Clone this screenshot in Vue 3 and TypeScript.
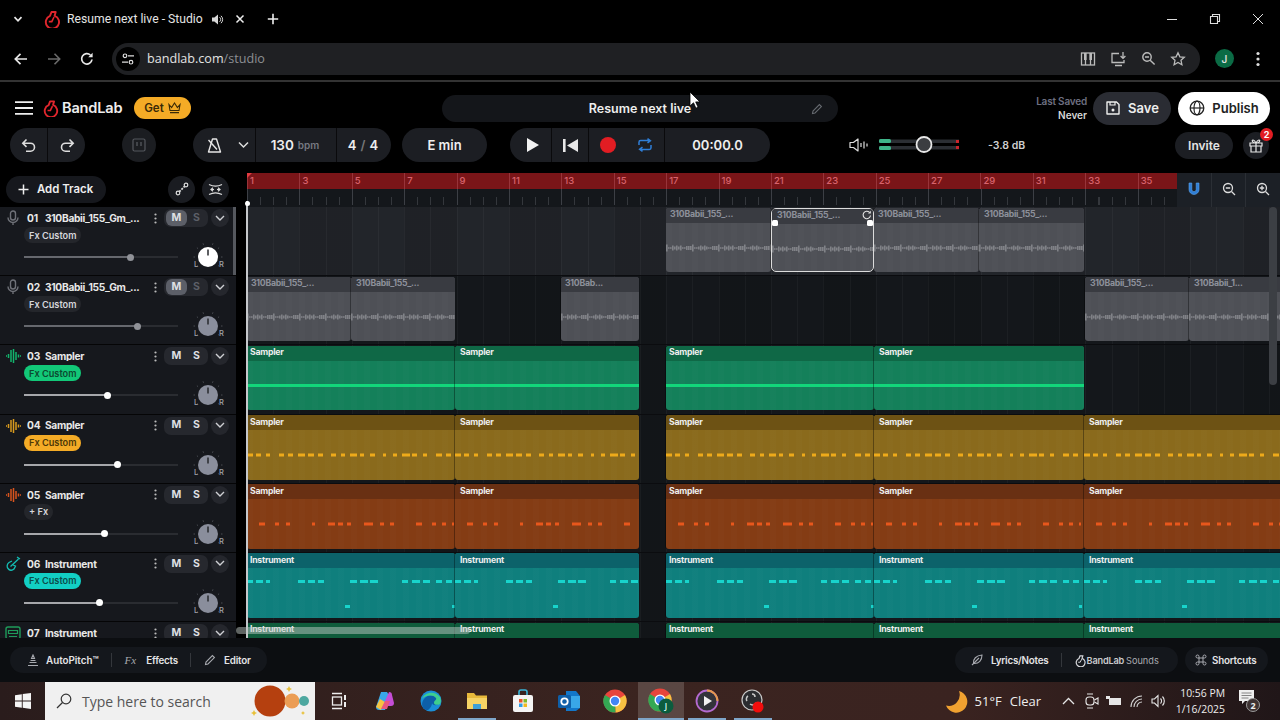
<script setup lang="ts">
import { computed } from "vue";

type Tone = "grey" | "green" | "gold" | "orange" | "teal" | "forest";

interface Track {
  num: string;
  name: string;
  chip: string;
  tone: Tone;
  icon: "mic" | "wave" | "guitar" | "keys";
  thumbX: number;
  muted?: boolean;
  bright?: boolean;
}

const BAR = 26.2;
const SLIDER_START = 24;
const SLIDER_WIDTH = 154;

const tracks: Track[] = [
  { num: "01", name: "310Babii_155_Gm_...", chip: "Fx Custom", tone: "grey", icon: "mic", thumbX: 130, muted: true, bright: true },
  { num: "02", name: "310Babii_155_Gm_...", chip: "Fx Custom", tone: "grey", icon: "mic", thumbX: 138, muted: true },
  { num: "03", name: "Sampler", chip: "Fx Custom", tone: "green", icon: "wave", thumbX: 107 },
  { num: "04", name: "Sampler", chip: "Fx Custom", tone: "gold", icon: "wave", thumbX: 117 },
  { num: "05", name: "Sampler", chip: "+ Fx", tone: "orange", icon: "wave", thumbX: 105 },
  { num: "06", name: "Instrument", chip: "Fx Custom", tone: "teal", icon: "guitar", thumbX: 99 },
  // last row is scrolled past the fold, only its top line shows
  { num: "07", name: "Instrument", chip: "", tone: "forest", icon: "keys", thumbX: 90 },
];

const iconColor: Record<Tone, string> = {
  grey: "#6f7178",
  green: "#13b56d",
  gold: "#d99a1e",
  orange: "#d9541e",
  teal: "#14bdb4",
  forest: "#1f9a5a",
};

// note spans in px from the clip's left edge
const goldNotes = [[0,6],[9,14],[19,23],[32,37],[41,46],[51,58],[61,67],[71,76],[84,89],[94,98],[103,110],[113,117],[123,128],[136,139],[146,150],[155,163],[165,170],[176,180],[189,195],[199,204]];
const orangeNotes = [[12,18],[28,32],[39,43],[65,68],[81,88],[91,96],[100,104],[117,126],[133,137],[143,147],[169,175],[185,189],[195,199],[205,207]];
const tealNotes = [[0,6],[9,16],[19,23],[51,58],[61,68],[71,77],[103,110],[113,121],[123,131],[155,161],[165,173],[176,183],[189,195],[199,205]];
const tealLow = [[98,103],[205,208]];

interface Rect { x: number; y: number; w: number; h: number }

function notesFor(tone: Tone, width: number): Rect[] {
  const spans = (list: number[][], y: number) =>
    list
      .filter((n) => n[0] < width)
      .map((n) => ({ x: n[0], y, w: Math.min(n[1], width) - n[0], h: 3 }));
  if (tone === "green") return [{ x: 0, y: 23, w: width, h: 3 }];
  if (tone === "gold") return spans(goldNotes, 23.5);
  if (tone === "orange") return spans(orangeNotes, 23.5);
  if (tone === "teal") return [...spans(tealNotes, 12), ...spans(tealLow, 37)];
  if (tone === "grey") {
    const out: Rect[] = [];
    for (let x = 0; x < width; x += 2) {
      const p = x % 26;
      const h = p < 2 ? 7 : p < 6 ? 1.5 : p < 16 ? 3 + ((x * 7) % 4) : p < 20 ? 1.5 : 4 - ((x * 3) % 3);
      out.push({ x, y: 25 - h / 2, w: 1.6, h });
    }
    return out;
  }
  return [];
}

function clipsFrom(edges: [number, number][], label: string) {
  return edges.map(([a, b]) => ({ x: a - 247, w: b - a, label }));
}

const mainEdges: [number, number][] = [[247, 455], [455, 639], [666, 874], [874, 1084], [1084, 1290]];

const lanes = computed(() => [
  {
    tone: "grey" as Tone,
    clips: [
      { x: 419, w: 105, label: "310Babii_155_..." },
      { x: 524, w: 103, label: "310Babii_155_...", selected: true },
      { x: 627, w: 105, label: "310Babii_155_..." },
      { x: 732, w: 105, label: "310Babii_155_..." },
    ],
  },
  {
    tone: "grey" as Tone,
    clips: [
      { x: 0, w: 104, label: "310Babii_155_..." },
      { x: 104, w: 104, label: "310Babii_155_..." },
      { x: 314, w: 78, label: "310Bab..." },
      { x: 838, w: 104, label: "310Babii_155_..." },
      { x: 942, w: 104, label: "310Babii_1..." },
    ],
  },
  { tone: "green" as Tone, clips: clipsFrom(mainEdges.slice(0, 4), "Sampler") },
  { tone: "gold" as Tone, clips: clipsFrom(mainEdges, "Sampler") },
  { tone: "orange" as Tone, clips: clipsFrom(mainEdges, "Sampler") },
  { tone: "teal" as Tone, clips: clipsFrom(mainEdges, "Instrument") },
  { tone: "forest" as Tone, clips: clipsFrom(mainEdges, "Instrument") },
]);

const rulerLabels = Array.from({ length: 18 }, (_, i) => i * 2 + 1);

function sliderPct(t: Track) {
  return ((t.thumbX - SLIDER_START) / SLIDER_WIDTH) * 100;
}

const knobTicks = [-130, -90, -50, -20, 20, 50, 90, 130].map((deg) => {
  const r = (deg * Math.PI) / 180;
  return { x1: 20 + Math.sin(r) * 13, y1: 16 - Math.cos(r) * 13, x2: 20 + Math.sin(r) * 14.5, y2: 16 - Math.cos(r) * 14.5 };
});

const barPx = `${BAR}px`;
</script>

<template>
  <div class="screen" :style="{ '--bar': barPx }">
    <!-- browser tab strip -->
    <div class="tabstrip">
      <svg class="tab-chevron" width="12" height="12" viewBox="0 0 12 12"><path d="M2.5 4.2 6 7.8l3.5-3.6" fill="none" stroke="#e8e8e8" stroke-width="1.7" /></svg>
      <svg class="tab-logo" width="18" height="18" viewBox="0 0 18 18"><path d="M7.5 2h4.2L10.6 5.8a6.6 6.6 0 1 1-4.6.1z" fill="none" stroke="#e0262d" stroke-width="1.9" stroke-linejoin="round" /><path d="M10 7 7.8 11.6H4.8" fill="none" stroke="#e0262d" stroke-width="1.6" /></svg>
      <span class="tab-title">Resume next live - Studio</span>
      <svg class="tab-speaker" width="13" height="13" viewBox="0 0 13 13"><path d="M1 4.5h2.4L7 1.6v9.8L3.4 8.5H1z" fill="#d8d8d8" /><path d="M8.6 4.2a3 3 0 0 1 0 4.6M10 2.8a5 5 0 0 1 0 7.4" fill="none" stroke="#d8d8d8" stroke-width="1" /></svg>
      <svg class="tab-close" width="10" height="10" viewBox="0 0 10 10"><path d="m1.5 1.5 7 7m0-7-7 7" stroke="#eee" stroke-width="1.5" /></svg>
      <svg class="tab-new" width="12" height="12" viewBox="0 0 12 12"><path d="M6 .8v10.4M.8 6h10.4" stroke="#eee" stroke-width="1.6" /></svg>
      <div class="window-buttons">
        <svg width="12" height="12" viewBox="0 0 12 12"><path d="M1 6.5h10" stroke="#ddd" stroke-width="1" /></svg>
        <svg width="12" height="12" viewBox="0 0 12 12"><path d="M1.5 3.5h7v7h-7zM3.5 3.5v-2h7v7h-2" fill="none" stroke="#ddd" stroke-width="1.1" /></svg>
        <svg width="12" height="12" viewBox="0 0 12 12"><path d="m1 1 10 10m0-10L1 11" stroke="#ddd" stroke-width="1" /></svg>
      </div>
    </div>

    <!-- browser toolbar -->
    <div class="toolbar">
      <svg class="nav first" width="16" height="16" viewBox="0 0 16 16"><path d="M14 8H2.5M7.5 2.8 2.3 8l5.2 5.2" fill="none" stroke="#e8e8e8" stroke-width="1.7" /></svg>
      <svg class="nav" width="16" height="16" viewBox="0 0 16 16"><path d="M2 8h11.5M8.5 2.8 13.7 8l-5.2 5.2" fill="none" stroke="#6a6a6a" stroke-width="1.6" /></svg>
      <svg class="nav" width="16" height="16" viewBox="0 0 16 16"><path d="M13 8.5A5.2 5.2 0 1 1 11.4 4" fill="none" stroke="#e8e8e8" stroke-width="1.7" /><path d="M13.6 1.8v4.4H9.2z" fill="#e8e8e8" /></svg>
      <div class="omnibox">
        <span class="site-info">
          <svg width="14" height="14" viewBox="0 0 14 14"><circle cx="4" cy="3.8" r="1.8" fill="none" stroke="#ddd" stroke-width="1.2" /><path d="M7 3.8h6M1 10.2h6" stroke="#ddd" stroke-width="1.2" /><circle cx="10" cy="10.2" r="1.8" fill="none" stroke="#ddd" stroke-width="1.2" /></svg>
        </span>
        <span class="url">bandlab.com<span class="url-path">/studio</span></span>
        <div class="omni-icons">
          <svg width="16" height="16" viewBox="0 0 16 16"><rect x="1.5" y="2" width="13" height="12" fill="none" stroke="#bbb" stroke-width="1.3" /><path d="M5.5 2v12M10.5 2v12" stroke="#bbb" stroke-width="1.3" /><path d="M4 2h2.6v7H4zM9.4 2H12v7H9.4z" fill="#bbb" /></svg>
          <svg width="17" height="16" viewBox="0 0 17 16"><path d="M9 2.5H2v9h12V9M5 14.5h7" fill="none" stroke="#bbb" stroke-width="1.3" /><path d="M13 1v6M10.6 5l2.4 2.4L15.4 5" fill="none" stroke="#bbb" stroke-width="1.3" /></svg>
          <svg width="15" height="15" viewBox="0 0 15 15"><circle cx="6" cy="6" r="4.2" fill="none" stroke="#bbb" stroke-width="1.4" /><path d="M4 6h4M9.2 9.2 13.6 13.6" stroke="#bbb" stroke-width="1.4" /></svg>
          <svg width="16" height="16" viewBox="0 0 16 16"><path d="m8 1.8 1.9 4 4.4.5-3.3 3 .9 4.4L8 11.5l-3.9 2.2.9-4.4-3.3-3 4.4-.5z" fill="none" stroke="#bbb" stroke-width="1.3" /></svg>
        </div>
      </div>
      <span class="avatar">J</span>
      <svg class="kebab" width="4" height="16" viewBox="0 0 4 16"><circle cx="2" cy="2.5" r="1.6" fill="#ddd" /><circle cx="2" cy="8" r="1.6" fill="#ddd" /><circle cx="2" cy="13.5" r="1.6" fill="#ddd" /></svg>
    </div>

    <!-- studio header -->
    <div class="studio-head">
      <svg class="burger" width="18" height="14" viewBox="0 0 18 14"><path d="M0 1.2h18M0 7h18M0 12.8h18" stroke="#eee" stroke-width="1.8" /></svg>
      <svg class="bl-logo" width="17" height="18" viewBox="0 0 18 18"><path d="M7.5 2h4.2L10.6 5.8a6.6 6.6 0 1 1-4.6.1z" fill="none" stroke="#e0262d" stroke-width="2" stroke-linejoin="round" /><path d="M10 7 7.8 11.6H4.8" fill="none" stroke="#e0262d" stroke-width="1.7" /></svg>
      <span class="bl-name">BandLab</span>
      <span class="get-pill">Get
        <svg width="13" height="12" viewBox="0 0 13 12"><path d="M1 2.5 3.6 5.5 6.5 1l2.9 4.5L12 2.5 11 8.5H2zM2 10.6h9" fill="none" stroke="#3a2a06" stroke-width="1.1" /></svg>
      </span>
      <div class="title-pill">
        <span>Resume next live</span>
        <svg width="12" height="12" viewBox="0 0 12 12"><path d="M1.5 10.5 2 8 8.4 1.6l2 2L4 10z" fill="none" stroke="#666a70" stroke-width="1.1" /></svg>
      </div>
      <div class="saved"><span class="saved-top">Last Saved</span><span class="saved-val">Never</span></div>
      <button class="btn-save">
        <svg width="16" height="16" viewBox="0 0 16 16"><path d="M2 2h9.5L14 4.5V14H2z" fill="none" stroke="#eee" stroke-width="1.4" stroke-linejoin="round" /><path d="M5 2v3h5V2" fill="none" stroke="#eee" stroke-width="1.2" /><circle cx="8" cy="10" r="1.5" fill="#eee" /></svg>
        Save
      </button>
      <button class="btn-publish">
        <svg width="16" height="16" viewBox="0 0 16 16"><circle cx="8" cy="8" r="6.8" fill="none" stroke="#222" stroke-width="1.3" /><ellipse cx="8" cy="8" rx="3" ry="6.8" fill="none" stroke="#222" stroke-width="1.2" /><path d="M1.2 8h13.6" stroke="#222" stroke-width="1.2" /></svg>
        Publish
      </button>
    </div>

    <!-- transport row -->
    <div class="transport-row">
      <div class="pill undo-group">
        <span class="cell undo-cell">
          <svg width="16" height="15" viewBox="0 0 16 15"><path d="M5.5 1.5 1.8 5.2l3.7 3.7M2 5.2h7.5a4 4 0 0 1 0 8H5" fill="none" stroke="#ddd" stroke-width="1.6" /></svg>
        </span>
        <span class="cell undo-cell">
          <svg width="16" height="15" viewBox="0 0 16 15"><path d="m10.5 1.5 3.7 3.7-3.7 3.7M14 5.2H6.5a4 4 0 0 0 0 8H11" fill="none" stroke="#ddd" stroke-width="1.6" /></svg>
        </span>
      </div>
      <span class="disabled-btn">
        <svg width="14" height="14" viewBox="0 0 14 14"><rect x="1" y="1" width="12" height="12" rx="1.5" fill="none" stroke="#55585e" stroke-width="1.2" /><path d="M5 4v4M9 4v4" stroke="#55585e" stroke-width="1.3" /></svg>
      </span>
      <div class="pill tempo-group">
        <span class="cell metro-cell">
          <svg width="17" height="17" viewBox="0 0 17 17"><path d="M6.5 2h4l4 13H2.5z" fill="none" stroke="#e6e6e6" stroke-width="1.4" stroke-linejoin="round" /><path d="M2.5 3 11 12.5" stroke="#e6e6e6" stroke-width="1.4" /></svg>
          <svg width="11" height="8" viewBox="0 0 11 8"><path d="m1 1.5 4.5 4.5L10 1.5" fill="none" stroke="#ddd" stroke-width="1.5" /></svg>
        </span>
        <span class="cell bpm-cell"><b>130</b><em>bpm</em></span>
        <span class="cell sig-cell"><b>4</b><i>/</i><b>4</b></span>
      </div>
      <div class="pill key-pill">E min</div>
      <div class="pill play-group">
        <span class="cell play-cell">
          <svg width="12" height="14" viewBox="0 0 12 14"><path d="M0 0v14l12-7z" fill="#f2f2f2" /></svg>
        </span>
        <span class="cell back-cell">
          <svg width="15" height="13" viewBox="0 0 15 13"><path d="M0 0h2.6v13H0zM15 0v13L4 6.5z" fill="#e8e8e8" /></svg>
        </span>
        <span class="cell rec-cell">
          <span class="rec-dot"></span>
          <svg width="16" height="14" viewBox="0 0 16 14"><path d="M2 7V4.2a1.6 1.6 0 0 1 1.6-1.6H13M14 7v2.8a1.6 1.6 0 0 1-1.6 1.6H3M10.5.6 13.4 2.7l-2.9 2.2M5.5 9.1 2.6 11.3l2.9 2.1" fill="none" stroke="#2f7fd8" stroke-width="1.5" /></svg>
        </span>
        <span class="cell time-cell">00:00.0</span>
      </div>
      <div class="volume">
        <svg width="19" height="14" viewBox="0 0 19 14"><path d="M1 4.5h3.4L9 1v12L4.4 9.500H1z" fill="none" stroke="#ddd" stroke-width="1.2" stroke-linejoin="round" /><path d="M12 5v4M15 3.500v7M18 5.500v3" stroke="#ddd" stroke-width="1.2" /></svg>
        <svg class="vol-meter" width="82" height="20" viewBox="0 0 82 20"><rect x="1" y="4.5" width="80" height="3.5" fill="#2b2e33" /><rect x="1" y="11" width="80" height="3.5" fill="#2b2e33" /><rect x="1" y="4" width="12" height="4" rx="1.5" fill="#3fb58a" /><rect x="1" y="11" width="12" height="4" rx="1.5" fill="#3fb58a" /><rect x="78" y="5" width="3" height="3" fill="#c9252c" /><rect x="78" y="11" width="3" height="3" fill="#c9252c" /><circle cx="46" cy="9.5" r="7.5" fill="#3b3d41" stroke="#e8e8e8" stroke-width="1.8" /></svg>
        <span class="vol-db">-3.8 dB</span>
      </div>
      <div class="invite-wrap">
        <span class="invite">Invite</span>
        <span class="gift">
          <svg width="14" height="15" viewBox="0 0 14 15"><path d="M1 5h12v3H1zM2 8v6h10V8M7 5v9M7 5C5 1 2.5 1.500 3.500 3.500 4 4.500 5.500 5 7 5c1.500 0 3-.5 3.500-1.500C11.500 1.500 9 1 7 5z" fill="none" stroke="#e6e6e6" stroke-width="1.2" /></svg>
          <span class="gift-badge">2</span>
        </span>
      </div>
    </div>

    <!-- arrangement -->
    <div class="arrange">
      <div class="side">
        <div class="side-head">
          <span class="add-track">
            <svg width="11" height="11" viewBox="0 0 11 11"><path d="M5.500.5v10M.5 5.500h10" stroke="#eee" stroke-width="1.5" /></svg>
            Add Track
          </span>
          <span class="round-btn first-round">
            <svg width="14" height="14" viewBox="0 0 14 14"><circle cx="3" cy="11" r="1.8" fill="none" stroke="#ddd" stroke-width="1.2" /><circle cx="11" cy="3" r="1.8" fill="none" stroke="#ddd" stroke-width="1.2" /><path d="M4.300 9.700 9.700 4.300" stroke="#ddd" stroke-width="1.8" stroke-dasharray="2 1" /></svg>
          </span>
          <span class="round-btn">
            <svg width="15" height="15" viewBox="0 0 15 15"><path d="M1 2.500c4 2 9 2 13 0M1 12.500c4-2 9-2 13 0M3 7.500H6M9 7.500h3M5 5.800 3 7.500l2 1.700M10 5.800l2 1.700-2 1.700" fill="none" stroke="#ddd" stroke-width="1.2" /></svg>
          </span>
        </div>
        <div class="track-list">
          <div v-for="t in tracks" :key="t.num" class="track" :class="{ selected: t.bright }">
            <div class="track-top">
              <svg v-if="t.icon === 'mic'" class="t-icon" width="16" height="16" viewBox="0 0 16 16"><rect x="5.500" y="1" width="5" height="9" rx="2.5" fill="none" stroke="#6f7178" stroke-width="1.4" /><path d="M3 7.500a5 5 0 0 0 10 0M8 12.500V15" fill="none" stroke="#6f7178" stroke-width="1.4" /></svg>
              <svg v-else-if="t.icon === 'wave'" class="t-icon" width="16" height="16" viewBox="0 0 16 16"><path d="M1 8h1M3.500 6v4M6 2v12M8.500 1v14M11 4v8M13.500 6.500v3M15 8h1" :stroke="iconColor[t.tone]" stroke-width="1.5" fill="none" /></svg>
              <svg v-else-if="t.icon === 'guitar'" class="t-icon" width="16" height="16" viewBox="0 0 16 16"><path d="M7 5 4 6.500C2 8 1.500 10.500 3 12.500s4 2.500 6 .5l1.500-3L8 9" fill="none" :stroke="iconColor[t.tone]" stroke-width="1.3" /><path d="m5.500 10.500 8-7.500M12 1l3 2" fill="none" :stroke="iconColor[t.tone]" stroke-width="1.3" /></svg>
              <svg v-else class="t-icon" width="16" height="16" viewBox="0 0 16 16"><rect x="1" y="2" width="14" height="12" rx="2" fill="none" :stroke="iconColor[t.tone]" stroke-width="1.4" /><path d="M3.500 5.500h9v3h-9zM4 11.500h8" fill="none" :stroke="iconColor[t.tone]" stroke-width="1.2" /></svg>
              <span class="t-num">{{ t.num }}</span>
              <span class="t-name">{{ t.name }}</span>
              <svg class="t-dots" width="3" height="11" viewBox="0 0 3 11"><circle cx="1.5" cy="1.5" r="1.1" fill="#bbb" /><circle cx="1.5" cy="5.5" r="1.1" fill="#bbb" /><circle cx="1.5" cy="9.5" r="1.1" fill="#bbb" /></svg>
              <div class="ms-group">
                <span class="ms-m" :class="{ on: t.muted }">M</span>
                <span class="ms-s" :class="{ dim: t.muted }">S</span>
              </div>
              <span class="t-chevron">
                <svg width="10" height="7" viewBox="0 0 10 7"><path d="m1 1 4 4 4-4" fill="none" stroke="#cfd0d4" stroke-width="1.4" /></svg>
              </span>
            </div>
            <span v-if="t.chip" class="chip" :class="`chip-${t.tone}`">{{ t.chip }}</span>
            <div v-if="t.chip" class="track-mix">
              <div class="slider" :class="{ muted: t.muted }">
                <span class="slider-fill" :style="{ width: sliderPct(t) + '%' }"></span>
              </div>
              <svg class="knob" width="40" height="32" viewBox="0 0 40 32">
                <line v-for="(k, i) in knobTicks" :key="i" :x1="k.x1" :y1="k.y1" :x2="k.x2" :y2="k.y2" stroke="#55585e" stroke-width="0.8" />
                <circle cx="20" cy="16" r="10" :fill="t.bright ? '#ffffff' : '#8a8e9c'" />
                <path d="M20 8.500v6" stroke="#26282d" stroke-width="1.5" />
                <text x="6" y="26" class="knob-letter">L</text>
                <text x="31" y="26" class="knob-letter">R</text>
              </svg>
            </div>
          </div>
          <span class="side-scroll"></span>
        </div>
      </div>

      <div class="timeline">
        <div class="ruler-row">
          <div class="ruler">
            <div class="ruler-top">
              <span v-for="n in rulerLabels" :key="n" class="ruler-cell">{{ n }}</span>
            </div>
            <div class="ruler-ticks"></div>
            <span class="loop-corner"></span>
          </div>
          <div class="zoom-tools">
            <span class="zoom-cell">
              <svg width="12" height="14" viewBox="0 0 12 14"><path d="M1 1h2.800v6.500a2.200 2.200 0 0 0 4.400 0V1H11v6.500a5 5 0 0 1-10 0z" fill="#2f7fd8" stroke="#5ea6ec" stroke-width="0.6" /></svg>
            </span>
            <span class="zoom-cell">
              <svg width="14" height="14" viewBox="0 0 14 14"><circle cx="6" cy="6" r="4.500" fill="none" stroke="#ddd" stroke-width="1.3" /><path d="M3.800 6h4.400M9.500 9.500l3.500 3.500" stroke="#ddd" stroke-width="1.3" /></svg>
            </span>
            <span class="zoom-cell">
              <svg width="14" height="14" viewBox="0 0 14 14"><circle cx="6" cy="6" r="4.500" fill="none" stroke="#ddd" stroke-width="1.3" /><path d="M3.800 6h4.400M6 3.800v4.400M9.500 9.500l3.500 3.500" stroke="#ddd" stroke-width="1.3" /></svg>
            </span>
          </div>
        </div>
        <div class="lanes">
          <div v-for="(lane, li) in lanes" :key="li" class="lane" :class="{ 'lane-lit': li === 0 }">
            <div
              v-for="(c, ci) in lane.clips"
              :key="ci"
              class="clip"
              :class="[`clip-${lane.tone}`, { 'clip-selected': 'selected' in c && c.selected }]"
              :style="{ left: c.x + 'px', width: c.w + 'px' }"
            >
              <div class="clip-head">
                <span>{{ c.label }}</span>
                <svg v-if="'selected' in c && c.selected" width="10" height="10" viewBox="0 0 10 10"><path d="M8.500 5.500A3.700 3.700 0 1 1 7.300 2.200" fill="none" stroke="#e6e6e6" stroke-width="1.1" /><path d="M8.800.8v2.800H6z" fill="#e6e6e6" /></svg>
              </div>
              <div class="clip-body">
                <svg :width="c.w" height="52">
                  <rect
                    v-for="(r, ri) in notesFor(lane.tone, c.w)"
                    :key="ri"
                    :x="r.x"
                    :y="r.y"
                    :width="r.w"
                    :height="r.h"
                    :class="`note-${lane.tone}`"
                  />
                </svg>
              </div>
              <template v-if="'selected' in c && c.selected">
                <span class="handle handle-l"></span>
                <span class="handle handle-r"></span>
              </template>
            </div>
          </div>
          <span class="v-scroll"></span>
        </div>
        <span class="playhead"></span>
      </div>
      <span class="h-scroll"></span>
    </div>

    <!-- bottom bar -->
    <div class="bottom-bar">
      <div class="bb-group bb-left">
        <span class="bb-item">
          <svg width="12" height="13" viewBox="0 0 12 13"><path d="M6 1 4.500 4.500h3zM3.500 6.500h5M2.500 8.500h7M1 11.500h10" fill="none" stroke="#a8aab0" stroke-width="1.1" /></svg>
          <b class="pitch">AutoPitch™</b>
        </span>
        <span class="bb-sep"></span>
        <span class="bb-item">
          <i class="fx-mark">Fx</i>
          <b class="gap-fx">Effects</b>
        </span>
        <span class="bb-sep"></span>
        <span class="bb-item">
          <svg width="12" height="12" viewBox="0 0 12 12"><path d="M1.500 10.500 2 8 8.400 1.600l2 2L4 10z" fill="none" stroke="#a8aab0" stroke-width="1.1" /></svg>
          <b class="gap-b">Editor</b>
        </span>
      </div>
      <div class="bb-group bb-right">
        <span class="bb-item">
          <svg width="12" height="12" viewBox="0 0 12 12"><path d="M1 11 5 7M2.500 9.500C2 5 5 1.500 11 1c0 5-3 9-8.500 8.500zM5 7l3-3" fill="none" stroke="#a8aab0" stroke-width="1.1" /></svg>
          <b class="gap-b">Lyrics/Notes</b>
        </span>
        <span class="bb-sep"></span>
        <span class="bb-item sounds">
          <svg width="12" height="13" viewBox="0 0 18 18"><path d="M7.500 2h4.200L10.600 5.800a6.600 6.600 0 1 1-4.600.1z" fill="none" stroke="#d5d6da" stroke-width="1.8" /><path d="M10 7 7.800 11.600H4.800" fill="none" stroke="#d5d6da" stroke-width="1.5" /></svg>
          <b>BandLab</b><span>Sounds</span>
        </span>
      </div>
      <div class="bb-group bb-short">
        <span class="bb-item short-item">
          <svg width="12" height="12" viewBox="0 0 12 12"><path d="M4 4h4v4H4zM4 4H2.500A1.500 1.500 0 1 1 4 2.500zM8 4V2.500A1.500 1.500 0 1 1 9.500 4zM4 8v1.500A1.500 1.500 0 1 1 2.500 8zM8 8h1.500A1.500 1.500 0 1 1 8 9.500z" fill="none" stroke="#a8aab0" stroke-width="1" /></svg>
          <b>Shortcuts</b>
        </span>
      </div>
    </div>

    <!-- windows taskbar -->
    <div class="taskbar">
      <span class="start">
        <svg width="16" height="16" viewBox="0 0 16 16"><path d="M0 2.200 6.800 1.200v6.300H0zM7.700 1.100 16 0v7.500H7.700zM0 8.400h6.800v6.400L0 13.800zM7.700 8.400H16V16l-8.300-1.200z" fill="#f5f5f5" /></svg>
      </span>
      <div class="search">
        <svg width="16" height="16" viewBox="0 0 16 16"><circle cx="10" cy="6" r="4.800" fill="none" stroke="#333" stroke-width="1.2" /><path d="M6.500 9.500 1 15" stroke="#333" stroke-width="1.3" /></svg>
        <span>Type here to search</span>
        <svg class="search-art" width="64" height="36" viewBox="0 0 64 36"><circle cx="19" cy="18" r="15.500" fill="#b5400f" /><circle cx="41" cy="18" r="7.500" fill="#eb9d55" /><circle cx="53" cy="18" r="5" fill="#4ea8a0" /><path d="M3 27l1 2 2 1-2 1-1 2-1-2-2-1 2-1zM38 3l1 2 2 1-2 1-1 2-1-2-2-1 2-1zM52 28l.7 1.300 1.300.7-1.300.7-.7 1.300-.7-1.300-1.300-.7 1.300-.7z" fill="#e8c13a" /></svg>
      </div>
      <div class="task-icons">
        <span class="ti">
          <svg width="18" height="18" viewBox="0 0 18 18"><path d="M2 1.500h10M2 16.500h10" stroke="#eee" stroke-width="1.3" /><rect x="2.500" y="5" width="9" height="8" fill="none" stroke="#eee" stroke-width="1.3" /><path d="M15 3v5M15 10v5" stroke="#eee" stroke-width="2" /></svg>
        </span>
        <span class="ti">
          <svg width="22" height="22" viewBox="0 0 22 22"><path d="M7 2h6l3 5-5 13H5a3 3 0 0 1-3-3z" fill="#38a7e8" /><path d="M15 2a3 3 0 0 1 3 3l2 8a3 3 0 0 1-3 3h-5l-1-5z" fill="#c44dd6" /><path d="M6 9 2 17l5 3 4-8z" fill="#f6c342" /><path d="M11 11h5l-3 8H7z" fill="#e8557f" /></svg>
        </span>
        <span class="ti">
          <svg width="22" height="22" viewBox="0 0 22 22"><circle cx="11" cy="11" r="10.500" fill="#1a8fd8" /><path d="M2 14C3 6 12 3 17 7c3 3 3 7 0 8-3 .5-5-.5-5-2 0 3-3 8-6 7-2-.5-4-3-4-6z" fill="#0d5fa8" /><path d="M2 9c2-7 13-9 18-2 1 2 1.500 5 0 7-2 1.500-6 1-6-1 0-3 3-3 2-5-3-4-11-3-14 1z" fill="#3ecf8e" /></svg>
        </span>
        <span class="ti active-line">
          <svg width="22" height="18" viewBox="0 0 22 18"><path d="M1 1h7l2 2.500h11V17H1z" fill="#e8b93b" /><path d="M1 6h20v11H1z" fill="#f6d365" /><rect x="7" y="12" width="8" height="5" fill="#3e9fd8" /></svg>
        </span>
        <span class="ti">
          <svg width="22" height="24" viewBox="0 0 22 24"><path d="M7 6V3a2 2 0 0 1 2-2h4a2 2 0 0 1 2 2v3" fill="none" stroke="#3ab4d8" stroke-width="1.6" /><rect x="1" y="6" width="20" height="17" rx="2" fill="#f4f4f4" /><rect x="7" y="10" width="3.500" height="3.500" fill="#e8532b" /><rect x="11.500" y="10" width="3.500" height="3.500" fill="#7fba2a" /><rect x="7" y="14.500" width="3.500" height="3.500" fill="#2f9de8" /><rect x="11.500" y="14.500" width="3.500" height="3.500" fill="#f2b91f" /></svg>
        </span>
        <span class="ti">
          <svg width="24" height="22" viewBox="0 0 24 22"><path d="M9 1h10l4 5v12l-4 3H9z" fill="#1377c9" /><path d="M14 6h9v12h-9z" fill="#39a7e8" /><rect x="1" y="5" width="13" height="13" rx="1.5" fill="#0f5fa8" /><circle cx="7.500" cy="11.500" r="3.200" fill="none" stroke="#fff" stroke-width="1.8" /></svg>
        </span>
        <span class="ti">
          <svg width="24" height="24" viewBox="0 0 24 24"><circle cx="12" cy="12" r="11.500" fill="#e8453c" /><path d="M12 12 22 6a11.500 11.500 0 0 1-9.500 17.500z" fill="#f6c142" /><path d="M12 12 12.500 23.500A11.500 11.500 0 0 1 2 6z" fill="#34a853" /><circle cx="12" cy="12" r="5.500" fill="#fff" /><circle cx="12" cy="12" r="4.200" fill="#4285f4" /></svg>
        </span>
        <span class="ti ti-on active-line">
          <svg width="26" height="26" viewBox="0 0 26 26"><circle cx="12" cy="12" r="11.500" fill="#e8453c" /><path d="M12 12 22 6a11.500 11.500 0 0 1-9.500 17.500z" fill="#f6c142" /><path d="M12 12 12.500 23.500A11.500 11.500 0 0 1 2 6z" fill="#34a853" /><circle cx="12" cy="12" r="5.500" fill="#fff" /><circle cx="12" cy="12" r="4.200" fill="#4285f4" /><circle cx="18" cy="18" r="7.500" fill="#0b5c3e" /><text x="18" y="21" class="j-letter">J</text></svg>
        </span>
        <span class="ti active-line">
          <svg width="24" height="24" viewBox="0 0 24 24"><circle cx="12" cy="12" r="10.500" fill="#33343a" stroke="#b56ad0" stroke-width="1.8" /><path d="M12 1.500a10.500 10.500 0 0 1 10.500 10.500" fill="none" stroke="#e69a4c" stroke-width="1.8" /><path d="M9 7v10l8-5z" fill="#f2f2f2" /></svg>
        </span>
        <span class="ti active-line">
          <svg width="24" height="24" viewBox="0 0 24 24"><circle cx="11" cy="11" r="10" fill="#2b2c30" stroke="#c8c8c8" stroke-width="1.2" /><path d="M11 5a3 3 0 0 1 3 3M6 12a3.500 3.500 0 0 1 1-5M15 14a4 4 0 0 1-6 1" fill="none" stroke="#c8c8c8" stroke-width="1.5" /><circle cx="17" cy="18" r="5.500" fill="#f20d0d" /></svg>
        </span>
      </div>
      <div class="tray">
        <svg class="moon" width="24" height="24" viewBox="0 0 24 24"><path d="M15 2a11 11 0 0 1-13 14.500A11 11 0 1 0 15 2z" fill="#f0a130" /></svg>
        <span class="weather temp">51°F</span>
        <span class="weather clear">Clear</span>
        <svg class="caret" width="13" height="8" viewBox="0 0 13 8"><path d="m1 7 5.500-5.500L12 7" fill="none" stroke="#e6e6e6" stroke-width="1.3" /></svg>
        <svg class="t-meet" width="14" height="16" viewBox="0 0 14 16"><rect x="1" y="4" width="8" height="8" rx="3" fill="none" stroke="#e6e6e6" stroke-width="1.1" /><path d="m9.500 7 3.500-2v6L9.500 9M2 1h6M2 15h6" fill="none" stroke="#e6e6e6" stroke-width="1.1" /></svg>
        <svg class="t-net" width="16" height="12" viewBox="0 0 16 12"><rect x="3" y="3" width="12" height="7" fill="#e6e6e6" /><path d="M0 1h4v3H0z" fill="#e6e6e6" /></svg>
        <svg class="t-wifi" width="14" height="13" viewBox="0 0 14 13"><path d="M1 12a11 11 0 0 1 11-11M4 12a8 8 0 0 1 8-8M7 12a5 5 0 0 1 5-5" fill="none" stroke="#d0d0d0" stroke-width="1.1" /></svg>
        <svg class="t-vol" width="16" height="14" viewBox="0 0 16 14"><path d="M1 5h2.500L7 1.500v11L3.500 9H1z" fill="none" stroke="#e6e6e6" stroke-width="1.1" /><path d="M9.500 4.500a3.500 3.500 0 0 1 0 5M11.500 2.500a6.500 6.500 0 0 1 0 9" fill="none" stroke="#e6e6e6" stroke-width="1.1" /></svg>
        <div class="clock"><span>10:56 PM</span><span>1/16/2025</span></div>
        <span class="notify">
          <svg width="24" height="24" viewBox="0 0 24 24"><path d="M1 1h15v11H7l-3 3v-3H1z" fill="#eee" /><path d="M3.500 4h10M3.500 6.500h10M3.500 9h7" stroke="#777" stroke-width="0.9" /><circle cx="15" cy="16" r="6.500" fill="#3d3232" stroke="#9a9a9a" stroke-width="1" /><text x="15" y="19.500" class="n-letter">2</text></svg>
        </span>
      </div>
    </div>

    <svg class="mouse-pointer" width="13" height="19" viewBox="0 0 13 19"><path d="M1 1v14l3.500-3.200 2.400 5.400 2.200-1-2.400-5.300H11z" fill="#fff" stroke="#000" stroke-width="0.8" /></svg>
  </div>
</template>

<style>
html, body { margin: 0; background: #000; }
</style>

<style scoped>
.screen {
  position: relative;
  width: 1280px;
  height: 720px;
  overflow: hidden;
  display: flex;
  flex-direction: column;
  background: #000;
  color: #eee;
  font-family: Inter, "Liberation Sans", sans-serif;
}
svg { display: block; flex: none; }

/* tab strip */
.tabstrip { height: 40px; box-sizing: border-box; padding-bottom: 2px; display: flex; align-items: center; flex: none; font-family: Roboto, sans-serif; }
.tab-chevron { margin-left: 12px; }
.tab-logo { margin-left: 20px; }
.tab-title { margin-left: 5px; width: 141px; font-size: 12.2px; color: #e4e4e4; white-space: nowrap; }
.tab-speaker { margin-left: 3px; }
.tab-close { margin-left: 11px; }
.tab-new { margin-left: 22px; }
.window-buttons { margin-left: auto; display: flex; gap: 31px; margin-right: 16px; }

/* toolbar */
.toolbar { display: flex; align-items: center; flex: none; border-bottom: 2px solid #333; box-sizing: border-box; height: 42px; padding-bottom: 3px; }
.nav { margin-left: 17px; }
.nav.first { margin-left: 13px; }
.omnibox { margin-left: 17px; width: 1088px; height: 32px; border-radius: 16px; background: #1f2023; display: flex; align-items: center; }
.site-info { width: 24px; height: 24px; margin-left: 4px; border-radius: 50%; background: #000; display: flex; align-items: center; justify-content: center; }
.url { margin-left: 7px; font-family: "Open Sans", sans-serif; font-size: 12.6px; color: #e4e4e4; }
.url-path { color: #8d8f93; }
.omni-icons { margin-left: auto; display: flex; align-items: center; gap: 14px; margin-right: 14px; }
.avatar { margin-left: 15px; width: 19px; height: 19px; border-radius: 50%; background: #0b6b45; color: #ddd; font-size: 10px; font-weight: 600; display: flex; align-items: center; justify-content: center; }
.kebab { margin-left: 22px; }

/* studio header */
.studio-head { height: 46px; box-sizing: border-box; padding-top: 6px; display: flex; align-items: center; flex: none; position: relative; }
.burger { margin-left: 15px; }
.bl-logo { margin-left: 10px; }
.bl-name { margin-left: 2px; width: 62px; font-size: 14.6px; font-weight: 600; letter-spacing: -0.2px; color: #eee; white-space: nowrap; }
.get-pill { margin-left: 10px; width: 57px; height: 22px; box-sizing: border-box; border-radius: 11px; background: #f4ab26; color: #3a2a06; font-size: 11.5px; font-weight: 600; display: flex; align-items: center; justify-content: center; gap: 4px; }
.title-pill { margin-left: 251px; width: 396px; height: 27px; border-radius: 14px; background: #14161a; display: flex; align-items: center; justify-content: center; font-size: 12.5px; font-weight: 600; color: #eee; position: relative; }
.title-pill svg { position: absolute; right: 15px; top: 8px; }
.saved { margin-left: auto; display: flex; flex-direction: column; align-items: flex-end; font-size: 10px; font-weight: 600; line-height: 14px; margin-right: 6px; }
.saved-top { color: #6d6f80; letter-spacing: -0.2px; }
.saved-val { color: #d6d6d6; }
button { border: 0; font-family: inherit; display: flex; align-items: center; justify-content: center; height: 33px; border-radius: 17px; font-size: 13px; font-weight: 600; gap: 7px; padding: 0; }
.btn-save { width: 78px; background: #2a2c33; color: #eee; }
.btn-publish { margin-left: 7px; margin-right: 10px; width: 92px; background: #fff; color: #222; }

/* transport row */
.transport-row { height: 34px; display: flex; align-items: center; flex: none; margin-bottom: 11px; }
.pill { height: 34px; border-radius: 17px; background: #1c1e23; display: flex; align-items: center; font-weight: 600; }
.cell { height: 100%; display: flex; align-items: center; justify-content: center; box-sizing: border-box; }
.cell + .cell { border-left: 1px solid #0a0a0c; }
.undo-group { margin-left: 10px; width: 75px; }
.undo-cell { flex: 1; }
.disabled-btn { margin-left: 37px; width: 34px; height: 34px; border-radius: 50%; background: #1b1d21; display: flex; align-items: center; justify-content: center; }
.tempo-group { margin-left: 37px; width: 198px; }
.metro-cell { width: 62px; gap: 15px; padding-left: 6px; }
.bpm-cell { width: 81px; gap: 4px; padding-right: 2px; font-size: 13.5px; color: #eee; }
.bpm-cell b { font-weight: 600; }
.bpm-cell em { font-style: normal; font-size: 10px; color: #777a82; }
.sig-cell { flex: 1; gap: 4px; padding-right: 2px; font-size: 13px; }
.sig-cell b { font-weight: 600; }
.sig-cell i { font-style: normal; color: #777; }
.key-pill { margin-left: 11px; width: 85px; justify-content: center; font-size: 13px; color: #eee; }
.play-group { margin-left: 23px; width: 260px; }
.play-cell { width: 41px; padding-left: 5px; }
.back-cell { width: 37px; }
.rec-cell { width: 76px; gap: 21px; padding-right: 1px; }
.rec-dot { width: 16px; height: 16px; border-radius: 50%; background: #e21d23; }
.time-cell { flex: 1; font-size: 13px; color: #eee; }
.volume { margin-left: 79px; display: flex; align-items: center; gap: 0; }
.vol-meter { margin-left: 10px; }
.vol-db { margin-left: 28px; font-size: 10.5px; font-weight: 600; color: #cfcfcf; width: 50px; }
.invite-wrap { margin-left: auto; display: flex; align-items: center; margin-right: 11px; gap: 10px; }
.invite { width: 58px; height: 27px; border-radius: 14px; background: #1c1e23; display: flex; align-items: center; justify-content: center; font-size: 12px; font-weight: 600; color: #e4e4e4; }
.gift { position: relative; width: 26px; height: 27px; border-radius: 50%; background: #1c1e23; display: flex; align-items: center; justify-content: center; }
.gift-badge { position: absolute; right: -4px; top: -4px; width: 13px; height: 13px; border-radius: 50%; background: #e21d23; color: #fff; font-size: 9px; font-weight: 700; display: flex; align-items: center; justify-content: center; }

/* arrangement */
.arrange { position: relative; height: 465px; display: flex; flex: none; overflow: hidden; }
.side { width: 247px; flex: none; display: flex; flex-direction: column; }
.side-head { height: 34px; box-sizing: border-box; padding-bottom: 2px; display: flex; align-items: center; flex: none; }
.add-track { margin-left: 6px; width: 100px; height: 27px; box-sizing: border-box; padding-left: 12px; border-radius: 14px; background: #16181d; display: flex; align-items: center; gap: 8px; font-size: 11.4px; font-weight: 600; color: #eee; }
.round-btn { width: 27px; height: 27px; border-radius: 50%; background: #1a1c21; display: flex; align-items: center; justify-content: center; margin-left: 7px; }
.first-round { margin-left: 62px; }
.track-list { position: relative; width: 236px; height: 431px; overflow: hidden; }
.track { height: 69.2px; box-sizing: border-box; background: #16181d; border-bottom: 1px solid #050506; display: flex; flex-direction: column; }
.track.selected { background: #17191e; }
.track-top { height: 20px; margin-top: 1px; display: flex; align-items: center; flex: none; line-height: 1; }
.t-icon { margin-left: 5px; }
.t-num { margin-left: 6px; width: 18px; font-size: 10.2px; font-weight: 700; color: #e8e8e8; }
.t-name { flex: 1; width: 0; font-size: 10.2px; font-weight: 700; letter-spacing: -0.3px; color: #e8e8e8; white-space: nowrap; overflow: hidden; }
.t-dots { margin-right: 7px; }
.ms-group { width: 44px; height: 18px; border-radius: 7px; background: #26282e; display: flex; align-items: center; font-size: 10.5px; font-weight: 700; color: #dfe0e3; }
.ms-m { width: 21px; height: 16px; margin-left: 2px; border-radius: 6px; display: flex; align-items: center; justify-content: center; }
.ms-m.on { background: #5c5f68; }
.ms-s { flex: 1; display: flex; align-items: center; justify-content: center; padding-right: 2px; }
.ms-s.dim { color: #5d6068; }
.t-chevron { width: 18px; height: 18px; margin-left: 3px; margin-right: 7px; border-radius: 50%; background: #25272d; display: flex; align-items: center; justify-content: center; }
.chip { align-self: flex-start; margin-left: 24px; height: 16px; margin-top: -1px; padding: 0 5px; border-radius: 8px; display: flex; align-items: center; font-size: 9.2px; font-weight: 600; flex: none; }
.chip-grey { background: #24262b; color: #d6d7db; }
.chip-green { background: #12c878; color: #0c4a30; }
.chip-gold { background: #f4ab26; color: #4d3808; }
.chip-orange { background: #24262b; color: #d6d7db; }
.chip-teal { background: #12cfc4; color: #0b4d4a; }
.chip-forest { background: #1f9a5a; color: #0c3a22; }
.track-mix { display: flex; align-items: center; height: 32px; margin-top: -2px; flex: none; }
.slider { margin-left: 24px; width: 154px; height: 2px; background: #2a2c31; }
.slider-fill { display: block; position: relative; height: 100%; background: #a6a7ab; }
.slider-fill::after { content: ""; position: absolute; right: -3.5px; top: -2.5px; width: 7px; height: 7px; border-radius: 50%; background: #fff; }
.slider.muted .slider-fill { background: #66686e; }
.slider.muted .slider-fill::after { background: #909298; }
.knob { margin-left: 10px; }
.knob-letter { font-size: 7.5px; fill: #a2a4aa; font-weight: 500; }
.side-scroll { position: absolute; right: 0; top: 0; width: 3px; height: 68px; background: #55585e; }

/* timeline */
.timeline { position: relative; flex: 1; width: 0; display: flex; flex-direction: column; }
.ruler-row { height: 34px; display: flex; flex: none; }
.ruler { position: relative; flex: 1; width: 0; background: #14171b; overflow: hidden; }
.ruler-top { height: 16px; background: #7a1518; display: flex; }
.ruler-cell { width: calc(var(--bar) * 2); flex: none; box-sizing: border-box; border-left: 1px solid #98343a; padding-left: 2px; font-size: 9.5px; font-weight: 500; line-height: 16px; color: #d8636c; }
.ruler-ticks {
  height: 18px;
  background-image:
    repeating-linear-gradient(to right, #3c3f45 0 1px, transparent 1px calc(var(--bar) * 2)),
    repeating-linear-gradient(to right, #34373c 0 1px, transparent 1px calc(var(--bar) / 2));
  background-size: 100% 16px, 100% 8px;
  background-position: 0 0, 0 8px;
  background-repeat: no-repeat;
}
.loop-corner { position: absolute; left: 0; top: 0; width: 0; height: 0; border-top: 5px solid #e23a40; border-right: 5px solid transparent; }
.zoom-tools { width: 103px; flex: none; display: flex; background: #1c2026; }
.zoom-cell { flex: 1; display: flex; align-items: center; justify-content: center; padding-bottom: 2px; }
.zoom-cell + .zoom-cell { border-left: 1px solid #2b2f35; }
.lanes { position: relative; height: 431px; overflow: hidden; background: #14171b; }
.lane {
  position: relative;
  height: 69.2px;
  box-sizing: border-box;
  border-bottom: 1px solid #0b0c0f;
  background-image:
    repeating-linear-gradient(to right, rgba(255, 255, 255, 0.035) 0 1px, transparent 1px var(--bar)),
    repeating-linear-gradient(to right, transparent 0 calc(var(--bar) * 2), rgba(0, 0, 0, 0.1) calc(var(--bar) * 2) calc(var(--bar) * 4));
}
.lane-lit { background-color: #22252a; }
.clip { position: absolute; top: 0.5px; height: 64.5px; box-sizing: border-box; border-radius: 3px; overflow: hidden; display: flex; flex-direction: column; }
.clip + .clip { box-shadow: -1px 0 0 rgba(0, 0, 0, 0.35); }
.clip-head { height: 13px; flex: none; display: flex; align-items: center; justify-content: space-between; padding: 0 3px 2px; font-size: 8.7px; font-weight: 700; letter-spacing: -0.25px; white-space: nowrap; overflow: hidden; }
.clip-body { flex: 1; overflow: hidden; background-image: repeating-linear-gradient(to right, rgba(255, 255, 255, 0.01) 0 6px, transparent 6px 13px); }
.clip:nth-child(2) .clip-head, .clip:nth-child(4) .clip-head, .clip:nth-child(5) .clip-head { padding-left: 5px; }
.clip-grey .clip-head { padding-left: 4px; }
.clip-grey { background: #4e5056; }
.clip-grey .clip-head { background: #393b41; color: #8d909a; }
.clip-green { background: #14805a; }
.clip-green .clip-head { background: #0f6846; color: #eee; }
.clip-gold { background: #8a6a1c; }
.clip-gold .clip-head { background: #6d5214; color: #eee; }
.clip-orange { background: #843c14; }
.clip-orange .clip-head { background: #693013; color: #eee; }
.clip-teal { background: #0f7f7d; }
.clip-teal .clip-head { background: #0c626a; color: #eee; }
.clip-forest { background: #14704a; }
.clip-forest .clip-head { background: #0f5c3c; color: #eee; }
.note-grey { fill: #a9abb0; opacity: 0.55; }
.note-green { fill: #12d67a; }
.note-gold { fill: #eeaa1a; }
.note-orange { fill: #e8571c; }
.note-teal { fill: #18d4cc; }
.note-forest { fill: #18d47a; }
.clip-selected { border: 1.5px solid #dcdcdc; border-radius: 5px; overflow: visible; z-index: 2; }
.clip-selected .clip-head { border-radius: 3px 3px 0 0; padding-right: 1px; }
.handle { position: absolute; top: 11px; width: 6px; height: 6px; border-radius: 1.5px; background: #fff; }
.handle-l { left: 0; }
.handle-r { right: 0; }
.v-scroll { position: absolute; right: 3px; top: 0; width: 8px; height: 178px; border-radius: 4px; background: #3c3f44; }
.playhead { position: absolute; left: -1px; top: 28px; bottom: 0; width: 2px; background: #c5c7ca; z-index: 3; }
.playhead::before { content: ""; position: absolute; left: -1.5px; top: 0; width: 5px; height: 5px; border-radius: 50%; background: #fff; }
.h-scroll { position: absolute; left: 236px; top: 454px; width: 234px; height: 7px; border-radius: 4px; background: rgba(190, 200, 195, 0.5); z-index: 4; }

/* bottom bar */
.bottom-bar { height: 44px; flex: none; background: #0c0e11; display: flex; align-items: center; }
.bb-group { height: 26px; border-radius: 13px; background: #14171c; display: flex; align-items: center; box-sizing: border-box; }
.bb-left { margin-left: 10px; width: 257px; padding-left: 17px; }
.bb-right { margin-left: auto; width: 223px; padding-left: 16px; }
.bb-short { margin-left: 7px; margin-right: 12px; width: 83px; padding-left: 10px; }
.bb-item { display: flex; align-items: center; gap: 7px; font-size: 9.8px; color: #e4e4e6; white-space: nowrap; }
.bb-item b { font-weight: 600; letter-spacing: -0.2px; }
.bb-item b.pitch { letter-spacing: 0; }
.gap-b { margin-left: 1px; }
.gap-fx { margin-left: 3px; }
.short-item { gap: 5px; }
.bb-sep { width: 1px; height: 14px; background: #34373c; margin: 0 12.5px; }
.fx-mark { font-family: "Liberation Serif", serif; font-size: 11px; color: #a8aab0; }
.sounds { gap: 0; color: #c9cacd; font-size: 9.2px; }
.sounds b { font-weight: 600; }
.sounds span { font-weight: 400; color: #a9abb0; margin-left: 2px; }

/* taskbar */
.taskbar { height: 38px; flex: none; display: flex; align-items: center; background: linear-gradient(to right, #2a1c1c, #3b2420 50%, #3a2320 75%, #201618); font-family: "Open Sans", sans-serif; }
.start { width: 45px; display: flex; justify-content: center; flex: none; }
.search { width: 270px; height: 38px; box-sizing: border-box; background: #f0f0f0; display: flex; align-items: center; padding-left: 11px; color: #555; font-size: 14px; flex: none; }
.search > span { margin-left: 10px; }
.search-art { margin-left: auto; }
.task-icons { display: flex; height: 100%; margin-left: 1px; }
.ti { position: relative; width: 46px; height: 100%; display: flex; align-items: center; justify-content: center; }
.active-line::after { content: ""; position: absolute; left: 4px; right: 4px; bottom: 0; height: 2px; background: #7fa6c9; }
.ti-on { background: rgba(255, 255, 255, 0.16); }
.ti-on::after { left: 0; right: 0; }
.j-letter { font-size: 8px; fill: #dff; text-anchor: middle; font-weight: 600; }
.tray { margin-left: auto; display: flex; align-items: center; height: 100%; margin-right: 18px; color: #eee; }
.weather { font-size: 13px; white-space: nowrap; }
.temp { margin-left: 7px; }
.clear { margin-left: 8px; }
.caret { margin-left: 21px; }
.t-meet { margin-left: 10px; }
.t-net { margin-left: 7px; }
.t-wifi { margin-left: 8px; }
.t-vol { margin-left: 7px; }
.clock { display: flex; flex-direction: column; align-items: flex-end; font-size: 10.4px; line-height: 16px; margin-left: 8px; width: 50px; white-space: nowrap; }
.notify { margin-left: 13px; }
.n-letter { font-size: 9px; fill: #eee; text-anchor: middle; font-weight: 700; }
.mouse-pointer { position: absolute; left: 689px; top: 91px; z-index: 9; }
</style>
